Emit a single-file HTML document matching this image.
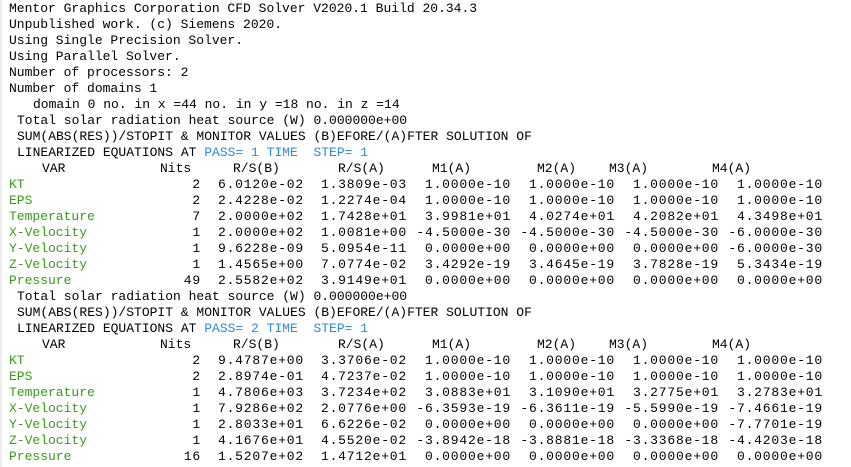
<!DOCTYPE html>
<html><head><meta charset="utf-8"><style>
html,body{margin:0;padding:0;background:#fff;width:851px;height:467px;overflow:hidden;position:relative}
body{font-family:"Liberation Mono","DejaVu Sans Mono","Courier New",monospace;font-size:13px;color:#000;border-left:2px solid #eee;box-sizing:border-box}
.r{position:absolute;left:0;width:851px;height:16px;line-height:16px;white-space:pre}
.r span{position:absolute;top:0}
.t{left:7px}
.r span.n{text-align:right;letter-spacing:0.8px}
.r span.c0{right:652px}.r span.c1{right:549px}.r span.c2{right:446px}.r span.c3{right:342px}.r span.c4{right:238px}.r span.c5{right:134px}.r span.c6{right:30px}
.g{color:#3b9a1c}.b{color:#2e8ad6}
.r span.b{position:static}
</style></head><body>
<div class="r" style="top:1px"><span class="t">Mentor Graphics Corporation CFD Solver V2020.1 Build 20.34.3</span></div>
<div class="r" style="top:17px"><span class="t">Unpublished work. (c) Siemens 2020.</span></div>
<div class="r" style="top:33px"><span class="t">Using Single Precision Solver.</span></div>
<div class="r" style="top:49px"><span class="t">Using Parallel Solver.</span></div>
<div class="r" style="top:65px"><span class="t">Number of processors: 2</span></div>
<div class="r" style="top:81px"><span class="t">Number of domains 1</span></div>
<div class="r" style="top:97px"><span style="left:31px">domain 0 no. in x =44 no. in y =18 no. in z =14</span></div>
<div class="r" style="top:113px"><span style="left:15px">Total solar radiation heat source (W) 0.000000e+00</span></div>
<div class="r" style="top:129px"><span style="left:15px">SUM(ABS(RES))/STOPIT &amp; MONITOR VALUES (B)EFORE/(A)FTER SOLUTION OF</span></div>
<div class="r" style="top:145px"><span style="left:15px">LINEARIZED EQUATIONS AT <span class="b">PASS= 1 TIME  STEP= 1</span></span></div>
<div class="r" style="top:161px"><span style="left:40px">VAR</span><span style="left:158px">Nits</span><span style="left:231px">R/S(B)</span><span style="left:336px">R/S(A)</span><span style="left:430px">M1(A)</span><span style="left:535px">M2(A)</span><span style="left:607px">M3(A)</span><span style="left:710px">M4(A)</span></div>

<div class="r" style="top:177px"><span class="t g">KT</span><span class="n c0">2</span><span class="n c1">6.0120e-02</span><span class="n c2">1.3809e-03</span><span class="n c3">1.0000e-10</span><span class="n c4">1.0000e-10</span><span class="n c5">1.0000e-10</span><span class="n c6">1.0000e-10</span></div>
<div class="r" style="top:193px"><span class="t g">EPS</span><span class="n c0">2</span><span class="n c1">2.4228e-02</span><span class="n c2">1.2274e-04</span><span class="n c3">1.0000e-10</span><span class="n c4">1.0000e-10</span><span class="n c5">1.0000e-10</span><span class="n c6">1.0000e-10</span></div>
<div class="r" style="top:209px"><span class="t g">Temperature</span><span class="n c0">7</span><span class="n c1">2.0000e+02</span><span class="n c2">1.7428e+01</span><span class="n c3">3.9981e+01</span><span class="n c4">4.0274e+01</span><span class="n c5">4.2082e+01</span><span class="n c6">4.3498e+01</span></div>
<div class="r" style="top:225px"><span class="t g">X-Velocity</span><span class="n c0">1</span><span class="n c1">2.0000e+02</span><span class="n c2">1.0081e+00</span><span class="n c3">-4.5000e-30</span><span class="n c4">-4.5000e-30</span><span class="n c5">-4.5000e-30</span><span class="n c6">-6.0000e-30</span></div>
<div class="r" style="top:241px"><span class="t g">Y-Velocity</span><span class="n c0">1</span><span class="n c1">9.6228e-09</span><span class="n c2">5.0954e-11</span><span class="n c3">0.0000e+00</span><span class="n c4">0.0000e+00</span><span class="n c5">0.0000e+00</span><span class="n c6">-6.0000e-30</span></div>
<div class="r" style="top:257px"><span class="t g">Z-Velocity</span><span class="n c0">1</span><span class="n c1">1.4565e+00</span><span class="n c2">7.0774e-02</span><span class="n c3">3.4292e-19</span><span class="n c4">3.4645e-19</span><span class="n c5">3.7828e-19</span><span class="n c6">5.3434e-19</span></div>
<div class="r" style="top:273px"><span class="t g">Pressure</span><span class="n c0">49</span><span class="n c1">2.5582e+02</span><span class="n c2">3.9149e+01</span><span class="n c3">0.0000e+00</span><span class="n c4">0.0000e+00</span><span class="n c5">0.0000e+00</span><span class="n c6">0.0000e+00</span></div>

<div class="r" style="top:289px"><span style="left:15px">Total solar radiation heat source (W) 0.000000e+00</span></div>
<div class="r" style="top:305px"><span style="left:15px">SUM(ABS(RES))/STOPIT &amp; MONITOR VALUES (B)EFORE/(A)FTER SOLUTION OF</span></div>
<div class="r" style="top:321px"><span style="left:15px">LINEARIZED EQUATIONS AT <span class="b">PASS= 2 TIME  STEP= 1</span></span></div>
<div class="r" style="top:337px"><span style="left:40px">VAR</span><span style="left:158px">Nits</span><span style="left:231px">R/S(B)</span><span style="left:336px">R/S(A)</span><span style="left:430px">M1(A)</span><span style="left:535px">M2(A)</span><span style="left:607px">M3(A)</span><span style="left:710px">M4(A)</span></div>

<div class="r" style="top:353px"><span class="t g">KT</span><span class="n c0">2</span><span class="n c1">9.4787e+00</span><span class="n c2">3.3706e-02</span><span class="n c3">1.0000e-10</span><span class="n c4">1.0000e-10</span><span class="n c5">1.0000e-10</span><span class="n c6">1.0000e-10</span></div>
<div class="r" style="top:369px"><span class="t g">EPS</span><span class="n c0">2</span><span class="n c1">2.8974e-01</span><span class="n c2">4.7237e-02</span><span class="n c3">1.0000e-10</span><span class="n c4">1.0000e-10</span><span class="n c5">1.0000e-10</span><span class="n c6">1.0000e-10</span></div>
<div class="r" style="top:385px"><span class="t g">Temperature</span><span class="n c0">1</span><span class="n c1">4.7806e+03</span><span class="n c2">3.7234e+02</span><span class="n c3">3.0883e+01</span><span class="n c4">3.1090e+01</span><span class="n c5">3.2775e+01</span><span class="n c6">3.2783e+01</span></div>
<div class="r" style="top:401px"><span class="t g">X-Velocity</span><span class="n c0">1</span><span class="n c1">7.9286e+02</span><span class="n c2">2.0776e+00</span><span class="n c3">-6.3593e-19</span><span class="n c4">-6.3611e-19</span><span class="n c5">-5.5990e-19</span><span class="n c6">-7.4661e-19</span></div>
<div class="r" style="top:417px"><span class="t g">Y-Velocity</span><span class="n c0">1</span><span class="n c1">2.8033e+01</span><span class="n c2">6.6226e-02</span><span class="n c3">0.0000e+00</span><span class="n c4">0.0000e+00</span><span class="n c5">0.0000e+00</span><span class="n c6">-7.7701e-19</span></div>
<div class="r" style="top:433px"><span class="t g">Z-Velocity</span><span class="n c0">1</span><span class="n c1">4.1676e+01</span><span class="n c2">4.5520e-02</span><span class="n c3">-3.8942e-18</span><span class="n c4">-3.8881e-18</span><span class="n c5">-3.3368e-18</span><span class="n c6">-4.4203e-18</span></div>
<div class="r" style="top:449px"><span class="t g">Pressure</span><span class="n c0">16</span><span class="n c1">1.5207e+02</span><span class="n c2">1.4712e+01</span><span class="n c3">0.0000e+00</span><span class="n c4">0.0000e+00</span><span class="n c5">0.0000e+00</span><span class="n c6">0.0000e+00</span></div>
</body></html>
